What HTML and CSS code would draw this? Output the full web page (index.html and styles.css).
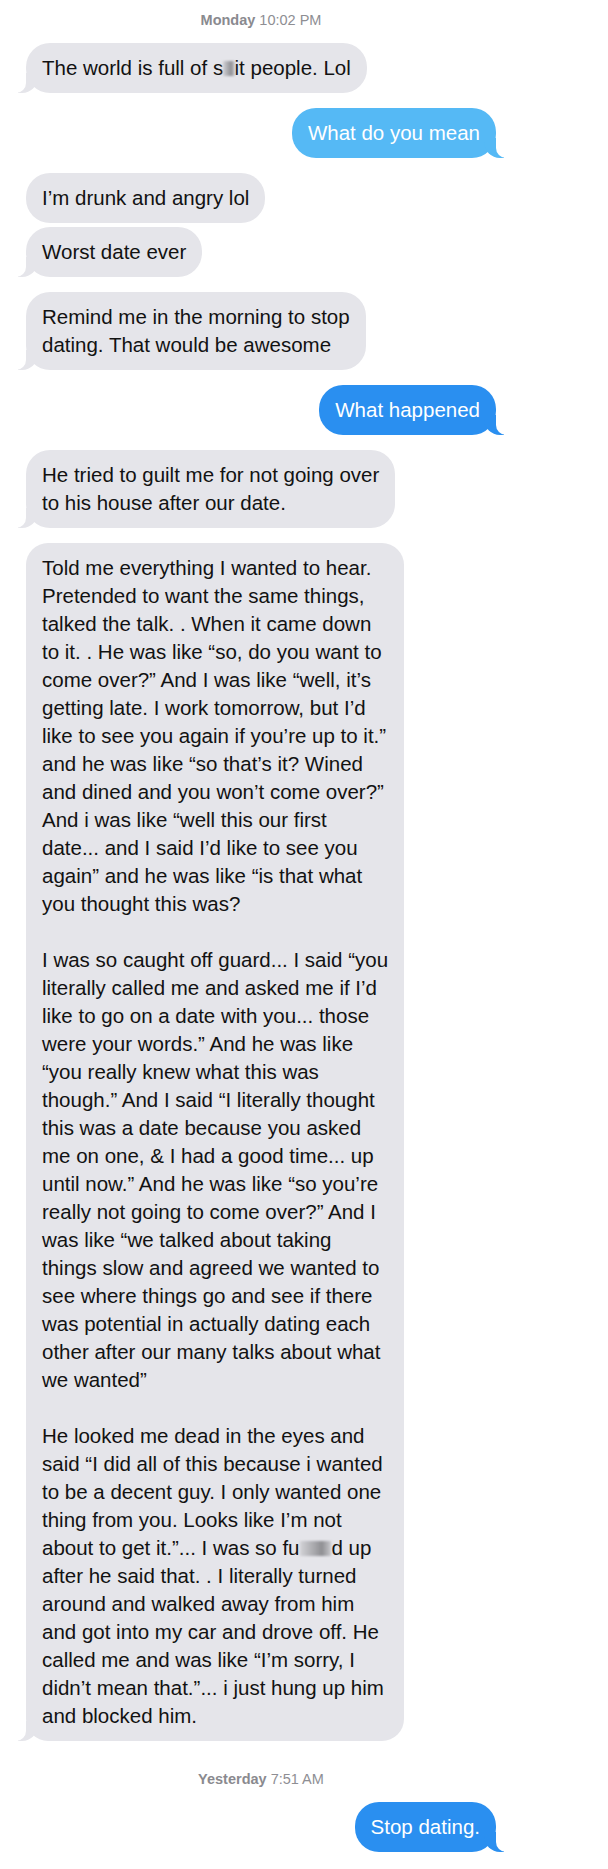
FILE: index.html
```html
<!DOCTYPE html>
<html lang="en">
<head>
<meta charset="utf-8">
<title>Messages</title>
<link rel="stylesheet" href="styles.css">
</head>
<body>
<main class="thread">
  <div class="stamp"><b>Monday</b> 10:02 PM</div>

  <div class="group in">
    <div class="bubble gray tail">The world is full of s<span class="blur">h</span>it people. Lol</div>
  </div>

  <div class="group out">
    <div class="bubble light tail">What do you mean</div>
  </div>

  <div class="group in">
    <div class="bubble gray">I’m drunk and angry lol</div>
    <div class="bubble gray tail">Worst date ever</div>
  </div>

  <div class="group in">
    <div class="bubble gray tail">Remind me in the morning to stop<br>dating. That would be awesome</div>
  </div>

  <div class="group out">
    <div class="bubble blue tail">What happened</div>
  </div>

  <div class="group in">
    <div class="bubble gray tail">He tried to guilt me for not going over<br>to his house after our date.</div>
  </div>

  <div class="group in">
    <div class="bubble gray tail long">Told me everything I wanted to hear.<br>Pretended to want the same things,<br>talked the talk. . When it came down<br>to it. . He was like “so, do you want to<br>come over?” And I was like “well, it’s<br>getting late. I work tomorrow, but I’d<br>like to see you again if you’re up to it.”<br>and he was like “so that’s it? Wined<br>and dined and you won’t come over?”<br>And i was like “well this our first<br>date... and I said I’d like to see you<br>again” and he was like “is that what<br>you thought this was?<br><br>I was so caught off guard... I said “you<br>literally called me and asked me if I’d<br>like to go on a date with you... those<br>were your words.” And he was like<br>“you really knew what this was<br>though.” And I said “I literally thought<br>this was a date because you asked<br>me on one, &amp; I had a good time... up<br>until now.” And he was like “so you’re<br>really not going to come over?” And I<br>was like “we talked about taking<br>things slow and agreed we wanted to<br>see where things go and see if there<br>was potential in actually dating each<br>other after our many talks about what<br>we wanted”<br><br>He looked me dead in the eyes and<br>said “I did all of this because i wanted<br>to be a decent guy. I only wanted one<br>thing from you. Looks like I’m not<br>about to get it.”... I was so fu<span class="blur">cke</span>d up<br>after he said that. . I literally turned<br>around and walked away from him<br>and got into my car and drove off. He<br>called me and was like “I’m sorry, I<br>didn’t mean that.”... i just hung up him<br>and blocked him.</div>
  </div>

  <div class="stamp later"><b>Yesterday</b> 7:51 AM</div>

  <div class="group out">
    <div class="bubble blue tail">Stop dating.</div>
  </div>
</main>
</body>
</html>
```

FILE: styles.css
```css
html, body {
  margin: 0;
  padding: 0;
  background: #ffffff;
}

body {
  width: 608px;
  font-family: "Liberation Sans", Arial, sans-serif;
  color: #111111;
}

.thread {
  width: 524px;
  box-sizing: border-box;
  padding: 11px 28px 17px 26px;
  display: flex;
  flex-direction: column;
  gap: 15px;
}

.stamp {
  text-align: center;
  font-size: 14.5px;
  line-height: 18px;
  color: #8e8e93;
  margin-bottom: -1px;
}

.stamp b {
  font-weight: 700;
  color: #8a8a8f;
}

.stamp.later {
  margin-top: 14px;
}

.group {
  display: flex;
  flex-direction: column;
  gap: 4px;
}

.group.in {
  align-items: flex-start;
}

.group.out {
  align-items: flex-end;
}

.bubble {
  position: relative;
  padding: 11px 16px;
  border-radius: 24px;
  font-size: 20.5px;
  line-height: 28px;
  white-space: nowrap;
}

.bubble.long {
  border-radius: 22px;
}

.gray {
  background: #e5e5ea;
  color: #121212;
}

.light {
  background: #55b9f5;
  color: #ffffff;
}

.blue {
  background: #2a8ff0;
  color: #ffffff;
}

/* bubble tails */
.in .tail::before {
  content: "";
  position: absolute;
  bottom: 0;
  left: -8px;
  width: 20px;
  height: 20px;
  background: #e5e5ea;
  border-bottom-right-radius: 16px;
}

.in .tail::after {
  content: "";
  position: absolute;
  bottom: 0;
  left: -10px;
  width: 10px;
  height: 20px;
  background: #ffffff;
  border-bottom-right-radius: 10px;
}

.out .tail::before {
  content: "";
  position: absolute;
  bottom: 0;
  right: -8px;
  width: 20px;
  height: 20px;
  background: inherit;
  border-bottom-left-radius: 16px;
}

.out .tail::after {
  content: "";
  position: absolute;
  bottom: 0;
  right: -10px;
  width: 10px;
  height: 20px;
  background: #ffffff;
  border-bottom-left-radius: 10px;
}

/* redaction blur */
.blur {
  color: transparent;
  background-image: linear-gradient(90deg, #d3d3d7 0%, #a9a9ad 45%, #8f8f93 70%, #c8c8cc 100%);
  background-size: 100% 15px;
  background-position: center 62%;
  background-repeat: no-repeat;
  filter: blur(0.8px);
}
```
